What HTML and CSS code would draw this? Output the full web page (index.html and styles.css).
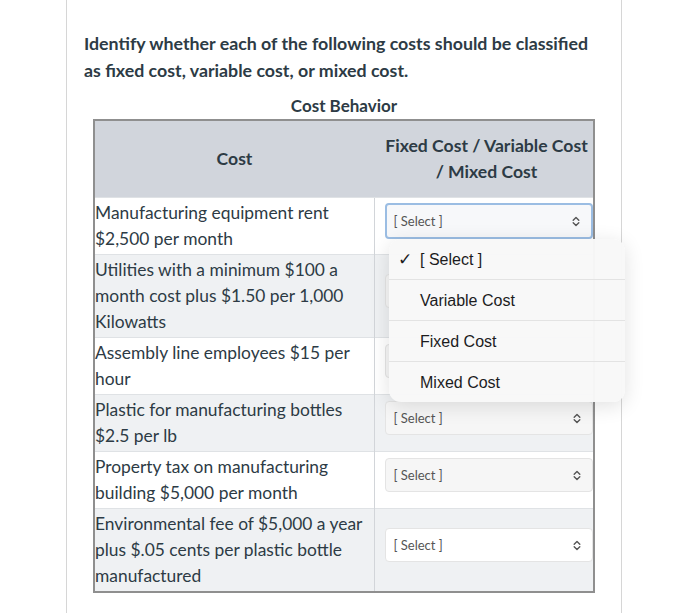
FILE: index.html
```html
<!DOCTYPE html>
<html lang="en">
<head>
    <meta charset="UTF-8">
    <meta name="viewport" content="width=device-width, initial-scale=1.0">
    <title>Cost Behavior</title>
    <link rel="stylesheet" href="styles.css">
</head>
<body>
    <div class="page">
        <div class="question">
            <p class="prompt">Identify whether each of the following costs should be classified as fixed cost, variable cost, or mixed cost.</p>

            <table class="cost-table">
                <caption>Cost Behavior</caption>
                <thead>
                    <tr>
                        <th class="col-cost">Cost</th>
                        <th class="col-answer">Fixed Cost / Variable Cost<br>/ Mixed Cost</th>
                    </tr>
                </thead>
                <tbody>
                    <tr class="r1">
                        <td>Manufacturing equipment rent $2,500 per month</td>
                        <td class="answer"><div class="select focused"><span>[ Select ]</span><svg width="8" height="11" viewBox="0 0 8 11"><path d="M1.2 4.2 L4 1.4 L6.8 4.2 M1.2 6.8 L4 9.6 L6.8 6.8" fill="none" stroke="#555" stroke-width="1.4" stroke-linecap="round" stroke-linejoin="round"/></svg></div></td>
                    </tr>
                    <tr class="alt r2">
                        <td>Utilities with a minimum $100 a month cost plus $1.50 per 1,000 Kilowatts</td>
                        <td class="answer"><div class="select"></div></td>
                    </tr>
                    <tr class="r3">
                        <td>Assembly line employees $15 per hour</td>
                        <td class="answer"><div class="select"></div></td>
                    </tr>
                    <tr class="alt r4">
                        <td>Plastic for manufacturing bottles $2.5 per lb</td>
                        <td class="answer"><div class="select"><span>[ Select ]</span><svg width="8" height="11" viewBox="0 0 8 11"><path d="M1.2 4.2 L4 1.4 L6.8 4.2 M1.2 6.8 L4 9.6 L6.8 6.8" fill="none" stroke="#555" stroke-width="1.4" stroke-linecap="round" stroke-linejoin="round"/></svg></div></td>
                    </tr>
                    <tr class="r5">
                        <td>Property tax on manufacturing building $5,000 per month</td>
                        <td class="answer"><div class="select"><span>[ Select ]</span><svg width="8" height="11" viewBox="0 0 8 11"><path d="M1.2 4.2 L4 1.4 L6.8 4.2 M1.2 6.8 L4 9.6 L6.8 6.8" fill="none" stroke="#555" stroke-width="1.4" stroke-linecap="round" stroke-linejoin="round"/></svg></div></td>
                    </tr>
                    <tr class="alt r6">
                        <td>Environmental fee of $5,000 a year plus $.05 cents per plastic bottle manufactured</td>
                        <td class="answer"><div class="select white"><span>[ Select ]</span><svg width="8" height="11" viewBox="0 0 8 11"><path d="M1.2 4.2 L4 1.4 L6.8 4.2 M1.2 6.8 L4 9.6 L6.8 6.8" fill="none" stroke="#555" stroke-width="1.4" stroke-linecap="round" stroke-linejoin="round"/></svg></div></td>
                    </tr>
                </tbody>
            </table>
        </div>

        <!-- open picker of the first select -->
        <ul class="picker">
            <li class="checked"><span class="check">✓</span>[ Select ]</li>
            <li>Variable Cost</li>
            <li>Fixed Cost</li>
            <li>Mixed Cost</li>
        </ul>
    </div>
</body>
</html>
```

FILE: styles.css
```css
* {
    margin: 0;
    padding: 0;
    box-sizing: border-box;
}

body {
    font-family: Lato, 'Open Sans', sans-serif;
    background: white;
    color: #2d3b45;
    height: 613px;
    overflow: hidden;
}

.page {
    position: relative;
    width: 556px;
    height: 613px;
    margin-left: 66px;
    border-left: 1px solid #d6d6d6;
    border-right: 1px solid #d6d6d6;
}

.question {
    padding: 30px 0 0 17px;
}

.prompt {
    font-size: 17.8px;
    font-weight: 700;
    line-height: 27px;
    width: 520px;
    color: #2d3b45;
}

.cost-table {
    margin: 11px 0 0 9px;
    width: 502px;
    border-collapse: collapse;
    border: 2px solid #8f8f8f;
    font-size: 17.4px;
}

.cost-table caption {
    font-weight: 700;
    font-size: 17px;
    line-height: 22px;
    padding-bottom: 2px;
    color: #2d3b45;
}

.cost-table th {
    background: #d1d5dc;
    font-weight: 700;
    font-size: 17.6px;
    line-height: 26px;
    height: 77px;
    text-align: center;
    vertical-align: middle;
    color: #2d3b45;
}

.col-cost {
    width: 280px;
}

.cost-table th.col-answer {
    padding-left: 6px;
}

.cost-table td {
    line-height: 26px;
    padding: 2px 4px 2px 0;
    vertical-align: middle;
    border-top: 1px solid #dfe2e5;
    color: #2d3b45;
}

.cost-table td + td {
    border-left: 1px solid #d2d5d9;
}

.cost-table tr.alt td {
    background: #eff1f3;
}

.r1 td { height: 57px; }
.r2 td { height: 82px; }
.r3 td { height: 55px; }
.r4 td { height: 57px; }
.r5 td { height: 55px; }
.r6 td { height: 83px; }

.cost-table td.answer {
    padding: 0 0 9px 10px;
}

.select {
    display: flex;
    align-items: center;
    justify-content: space-between;
    height: 34px;
    padding: 0 11px 0 8px;
    background: #f6f6f6;
    border: 1px solid #e4e4e4;
    border-radius: 4px;
    font-size: 13px;
    color: #555;
}

.select.white {
    background: white;
}

.select.focused {
    height: 36px;
    border: 2px solid #9bbde3;
    background: #f7f8fa;
    padding-left: 7px;
}

.picker {
    position: absolute;
    left: 322px;
    top: 239px;
    width: 236px;
    list-style: none;
    background: rgba(248, 248, 248, 0.97);
    border-radius: 12px;
    box-shadow: 0 4px 20px rgba(0, 0, 0, 0.12);
    font-family: 'Liberation Sans', Arial, sans-serif;
    font-size: 16px;
    color: #1c1c1e;
    overflow: hidden;
}

.picker li {
    height: 41px;
    line-height: 41px;
    padding-left: 31px;
    border-top: 1px solid #e3e3e3;
}

.picker li:first-child {
    border-top: none;
    height: 40px;
    line-height: 40px;
}

.picker .check {
    display: inline-block;
    width: 22px;
    margin-left: -22px;
    font-family: 'DejaVu Sans', sans-serif;
    font-size: 17px;
    font-weight: 700;
}
```
